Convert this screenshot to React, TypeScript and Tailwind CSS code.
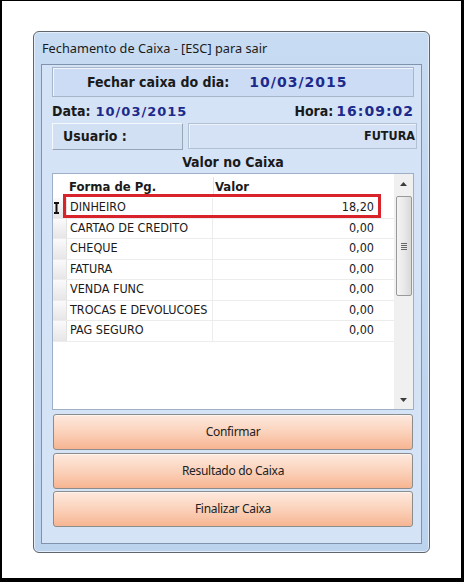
import React from "react";

const rows: [string, string][] = [
  ["DINHEIRO", "18,20"],
  ["CARTAO DE CREDITO", "0,00"],
  ["CHEQUE", "0,00"],
  ["FATURA", "0,00"],
  ["VENDA FUNC", "0,00"],
  ["TROCAS E DEVOLUCOES", "0,00"],
  ["PAG SEGURO", "0,00"],
];

const tahoma = "font-['DejaVu_Sans_Condensed','DejaVu_Sans',sans-serif]";
const verdana = "font-['DejaVu_Sans',sans-serif]";
const segoe = "font-['Noto_Sans','Open_Sans',sans-serif]";

const ActionButton = ({ label }: { label: string }) => (
  <button
    className={`${segoe} h-[36px] w-full rounded-[3px] border border-[#8c8c8c] bg-gradient-to-b from-[#fde9de] via-[#fbd2bb] to-[#f6b592] text-[12px] tracking-[-0.3px] text-[#222] shadow-[inset_0_1px_0_#fff4ee]`}
  >
    {label}
  </button>
);

export default function App() {
  return (
    <div className="h-[582px] w-[464px] border-b-4 border-l-2 border-r-[3px] border-t border-black bg-white pl-[31px] pt-[30px]">
      {/* window */}
      <div className="flex h-[522px] w-[397px] flex-col rounded-[6px] border border-[#5f656d] bg-gradient-to-b from-[#c7dbf2] to-[#bcd3ee] px-[7px] pb-[8px] shadow-[inset_0_0_0_1px_#e4eefa]">
        <div className={`${segoe} flex h-[32px] items-center pl-[1px] pt-[1px] text-[12.75px] text-[#1b1b1b]`}>
          Fechamento de Caixa - [ESC] para sair
        </div>

        {/* client area */}
        <div className="flex flex-1 flex-col border border-[#7f93ad] bg-[#d5e3f6] pl-[10px] pr-[7px]">
          <div
            className={`${tahoma} mt-[2px] flex h-[30px] items-center border border-[#a7b6cb] bg-[#cddcf5] pl-[34px] text-[14px] font-bold shadow-[inset_1px_1px_0_#f2f6fc]`}
          >
            <span className="text-[#1a1a1a]">Fechar caixa do dia:</span>
            <span className={`${verdana} ml-[20px] tracking-[1px] text-[#1c2a8c]`}>10/03/2015</span>
          </div>

          <div className={`${tahoma} mt-[5px] flex h-[19px] items-center justify-between text-[14px] font-bold`}>
            <div>
              <span className="text-[#1a1a1a]">Data:</span>
              <span className={`${verdana} ml-[5px] text-[13px] tracking-[1px] text-[#1c2a8c]`}>10/03/2015</span>
            </div>
            <div>
              <span className="text-[#1a1a1a]">Hora:</span>
              <span className={`${verdana} ml-[3px] text-[14px] tracking-[1px] text-[#1c2a8c]`}>16:09:02</span>
            </div>
          </div>

          <div className={`${tahoma} mt-[2px] flex h-[27px] gap-[5px] text-[14px] font-bold text-[#1a1a1a]`}>
            <div className="flex w-[131px] items-center border border-b-[#9aa6b6] border-l-[#f5f8fd] border-r-[#9aa6b6] border-t-[#f5f8fd] bg-[#d2e0f4] pl-[10px]">
              Usuario :
            </div>
            <div className="mr-[-3px] mb-[1px] flex flex-1 items-center justify-end border border-[#b3c1d4] bg-[#d5e2f5] pr-[1px] text-[12.5px] shadow-[inset_1px_1px_0_#eef3fb]">
              FUTURA
            </div>
          </div>

          <div className={`${tahoma} mt-[2px] flex h-[20px] items-center justify-center text-[14px] font-bold text-[#1a1a1a]`}>
            Valor no Caixa
          </div>

          {/* grid */}
          <div className={`${tahoma} relative mt-[1px] flex h-[237px] border border-[#9fb0c6] bg-white text-[12.5px] text-[#1a1a1a]`}>
            <div className="flex flex-1 flex-col pt-[3px]">
              <div className="flex h-[21px] items-start text-[13px] font-bold">
                <div className="w-[14px]" />
                <div className="w-[146px] pl-[2px]">Forma de Pg.</div>
                <div className="flex-1 border-l border-[#e4e4e4] pl-[1px]">Valor</div>
              </div>
              {rows.map(([name, value], i) => (
                <div key={name} className="flex h-[20.5px] border-b border-[#ececec]">
                  <div className="flex w-[14px] items-center border-r border-[#e2e2e2] bg-gradient-to-b from-[#fafafa] to-[#e6e6e6]">
                    {i === 0 && (
                      <svg width="6" height="12" viewBox="0 0 6 12" className="ml-[1px]">
                        <path d="M0 0h5v2H3.5v8H5v2H0v-2h1.5V2H0z" fill="#111" />
                      </svg>
                    )}
                  </div>
                  <div className="flex w-[146px] items-center border-r border-[#ececec] pl-[3px]">{name}</div>
                  <div className="flex w-[166px] items-center justify-end pr-[5px]">{value}</div>
                </div>
              ))}
            </div>

            {/* vertical scrollbar */}
            <div className="flex w-[19px] flex-col items-center bg-[#f0f0f0]">
              <div className="flex h-[19px] items-center justify-center">
                <svg width="7" height="4" viewBox="0 0 7 4">
                  <path d="M0 4L3.5 0L7 4z" fill="#3c3c3c" />
                </svg>
              </div>
              <div className="mt-[3px] flex h-[100px] w-[16px] items-center justify-center rounded-[2px] border border-[#9a9a9a] bg-gradient-to-r from-[#f4f4f4] via-[#e9e9e9] to-[#d9d9d9]">
                <div className="flex flex-col gap-[1px]">
                  <div className="h-px w-[6px] bg-[#666]" />
                  <div className="h-px w-[6px] bg-[#666]" />
                  <div className="h-px w-[6px] bg-[#666]" />
                  <div className="h-px w-[6px] bg-[#666]" />
                </div>
              </div>
              <div className="flex-1" />
              <div className="flex h-[19px] items-center justify-center">
                <svg width="7" height="4" viewBox="0 0 7 4">
                  <path d="M0 0L3.5 4L7 0z" fill="#3c3c3c" />
                </svg>
              </div>
            </div>

            {/* highlight around the selected row */}
            <div className="pointer-events-none absolute left-[10px] top-[20px] h-[24px] w-[318px] border-[3px] border-[#d8232a]" />
          </div>

          <div className="mt-[4px] flex flex-col gap-[2.5px] pl-[1px] pr-[1px]">
            <ActionButton label="Confirmar" />
            <ActionButton label="Resultado do Caixa" />
            <ActionButton label="Finalizar Caixa" />
          </div>
        </div>
      </div>
    </div>
  );
}
